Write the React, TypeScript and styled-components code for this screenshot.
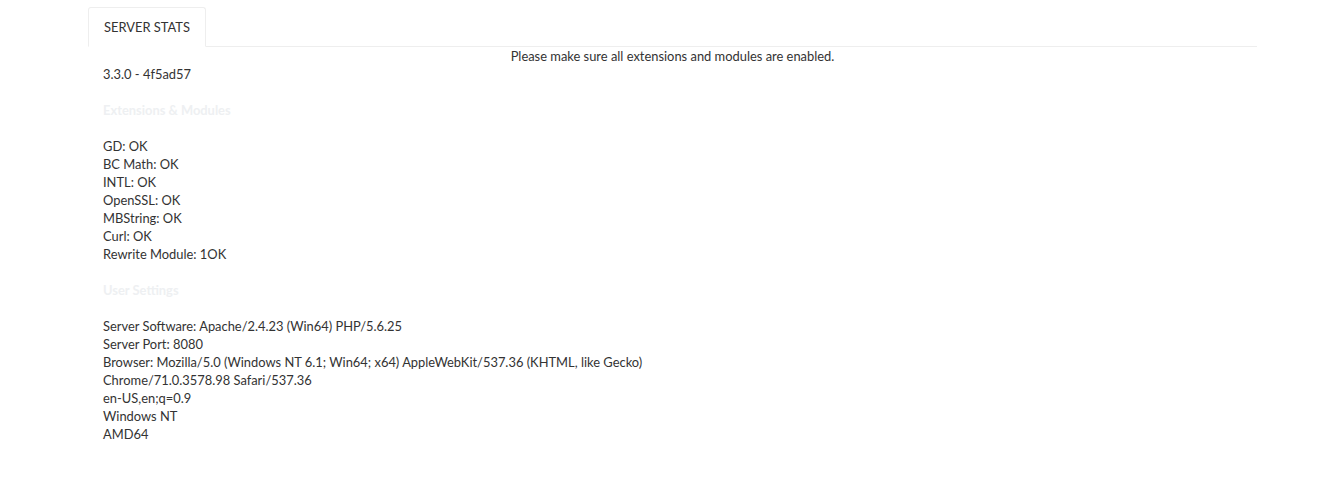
import React from 'react';
import styled, { createGlobalStyle } from 'styled-components';

const GlobalStyle = createGlobalStyle`
    body {
        margin: 0;
        background: #ffffff;
        font-family: Lato, 'Open Sans', sans-serif;
        font-size: 12.9px;
        color: #333333;
    }
`;

const modules = [
    'GD: OK',
    'BC Math: OK',
    'INTL: OK',
    'OpenSSL: OK',
    'MBString: OK',
    'Curl: OK',
    'Rewrite Module: 1OK',
];

const settings = [
    'Server Software: Apache/2.4.23 (Win64) PHP/5.6.25',
    'Server Port: 8080',
    'Browser: Mozilla/5.0 (Windows NT 6.1; Win64; x64) AppleWebKit/537.36 (KHTML, like Gecko)',
    'Chrome/71.0.3578.98 Safari/537.36',
    'en-US,en;q=0.9',
    'Windows NT',
    'AMD64',
];

const App = () => {
    return (
        <>
            <GlobalStyle />
            <Container>
                <TabBar>
                    <Tab>SERVER STATS</Tab>
                </TabBar>
                <Panel>
                    <Notice>Please make sure all extensions and modules are enabled.</Notice>
                    <Line>3.3.0 - 4f5ad57</Line>
                    <Heading>Extensions &amp; Modules</Heading>
                    {modules.map((m) => <Line key={m}>{m}</Line>)}
                    <Heading>User Settings</Heading>
                    {settings.map((s) => <Line key={s}>{s}</Line>)}
                </Panel>
            </Container>
        </>
    );
}

export default App;

const Container = styled.div`
    width: 1169px;
    margin: 7px 0 0 88px;
`;

const TabBar = styled.div`
    display: flex;
    border-bottom: 1px solid #eeeeee;
`;

const Tab = styled.div`
    box-sizing: border-box;
    width: 118px;
    height: 40px;
    margin-bottom: -1px;
    padding-left: 15px;
    display: flex;
    align-items: center;
    background: #ffffff;
    border: 1px solid #eeeeee;
    border-bottom-color: #ffffff;
    border-radius: 3px 3px 0 0;
    color: #333333;
`;

const Panel = styled.div`
    padding: 0 15px;
    line-height: 18px;
`;

const Notice = styled.div`
    text-align: center;
`;

const Line = styled.div`
    white-space: nowrap;
`;

const Heading = styled.div`
    margin: 18px 0 18px;
    font-weight: bold;
    color: #eef0f2;
`;
